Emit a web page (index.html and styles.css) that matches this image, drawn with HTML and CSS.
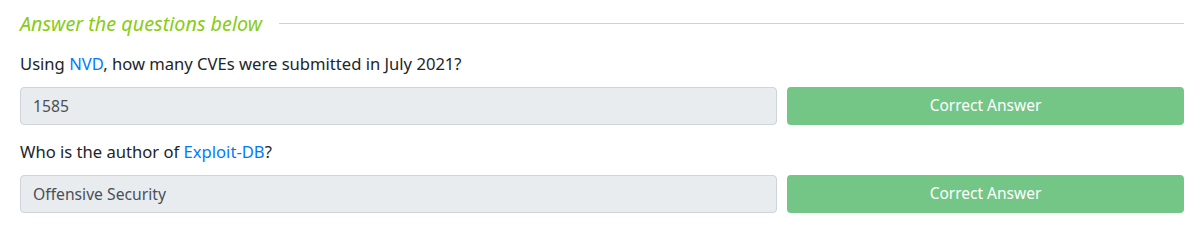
FILE: index.html
```html
<!DOCTYPE html>
<html lang="en">
<head>
    <meta charset="UTF-8">
    <title>Answer the questions</title>
    <link rel="stylesheet" href="styles.css">
</head>
<body>
    <div class="questions">
        <div class="questions-title">
            <h4>Answer the questions below</h4>
            <span class="title-line"></span>
        </div>
        <div class="question">
            <p>Using <a href="#">NVD</a>, how many CVEs were submitted in July 2021?</p>
            <div class="answer-row">
                <input type="text" value="1585" disabled>
                <button class="btn-correct" disabled>Correct Answer</button>
            </div>
        </div>
        <div class="question">
            <p>Who is the author of <a href="#">Exploit-DB</a>?</p>
            <div class="answer-row">
                <input type="text" value="Offensive Security" disabled>
                <button class="btn-correct" disabled>Correct Answer</button>
            </div>
        </div>
    </div>
</body>
</html>
```
FILE: styles.css
```css
*{
    box-sizing: border-box;
    margin: 0;
    padding: 0;
}
body{
    background-color: white;
    font-family: "Noto Sans", "Open Sans", sans-serif;
    color: #212529;
}
.questions{
    padding: 8px 17px 0 20px;
}
.questions-title{
    display: flex;
    align-items: center;
    gap: 17px;
    height: 30px;
}
.questions-title h4{
    font-size: 19.8px;
    font-style: italic;
    font-weight: 400;
    color: #88cc14;
}
.title-line{
    flex: 1;
    height: 1px;
    background-color: #d0d0d0;
}
.question p{
    font-size: 16.6px;
    line-height: 24px;
    margin: 14px 0 11px 0;
}
.question + .question p{
    margin-top: 15px;
}
.question a{
    color: #007bff;
    text-decoration: none;
}
.answer-row{
    display: grid;
    grid-template-columns: 1fr 397px;
    gap: 10px;
}
.answer-row input{
    height: 38px;
    border: 1px solid #ced4da;
    border-radius: 4px;
    background-color: #e9ecef;
    color: #495057;
    font-family: inherit;
    font-size: 15.7px;
    padding: 0 12px;
}
.btn-correct{
    height: 38px;
    border: none;
    border-radius: 4px;
    background-color: #73c686;
    color: white;
    font-family: inherit;
    font-size: 15.5px;
    padding-bottom: 2px;
}
```
